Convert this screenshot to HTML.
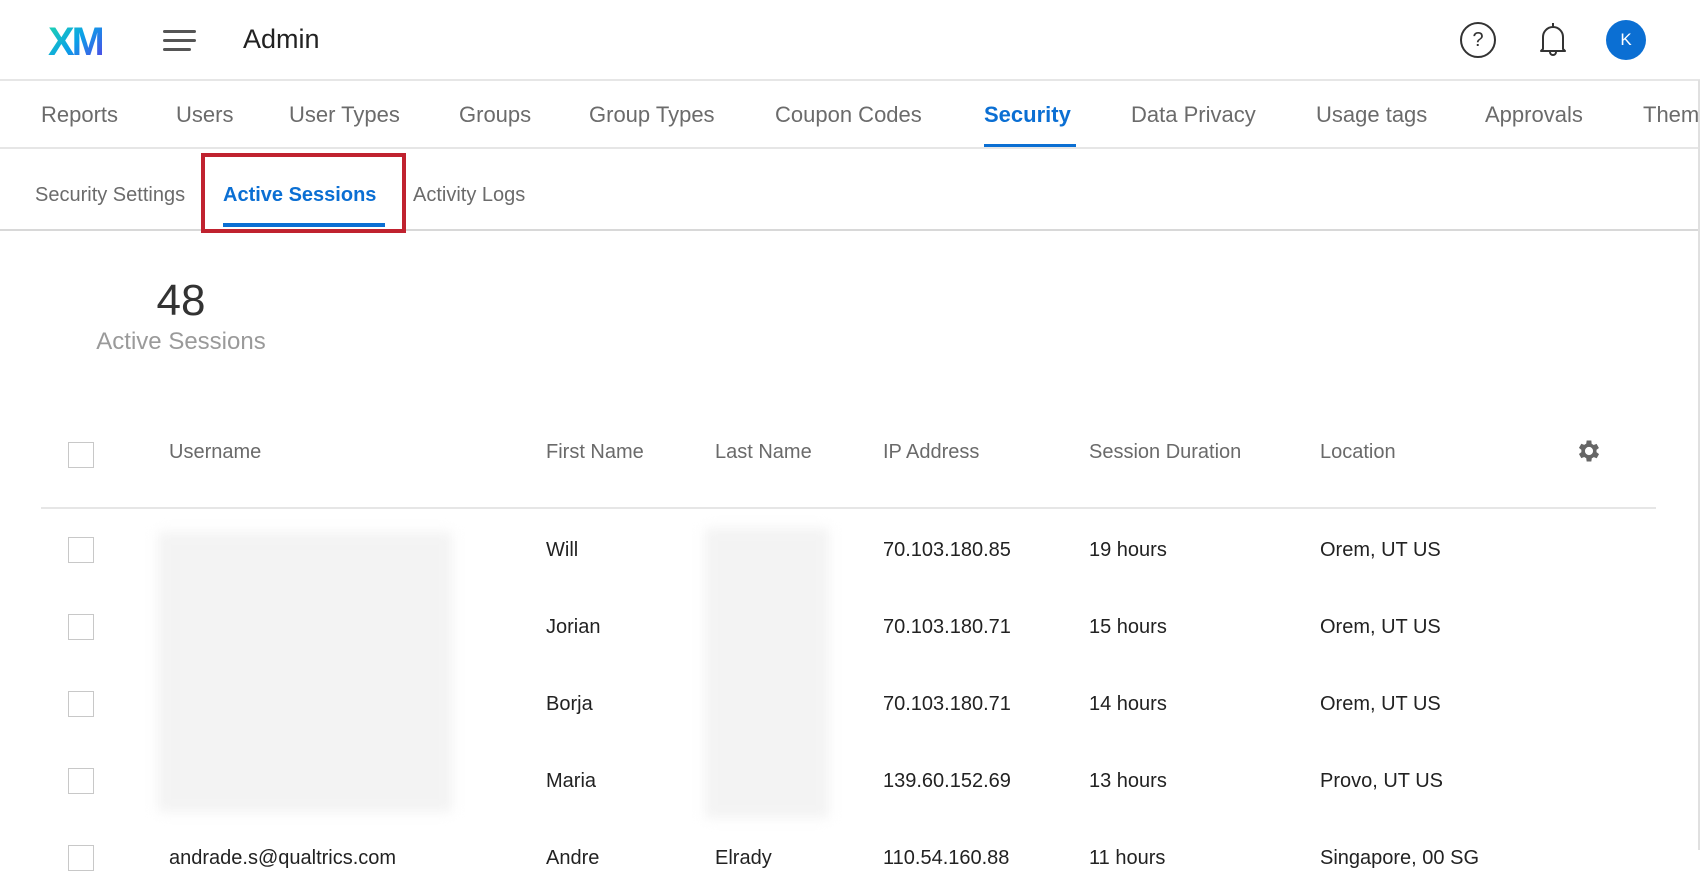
<!DOCTYPE html>
<html><head><meta charset="utf-8"><style>
*{margin:0;padding:0;box-sizing:border-box}
body{width:1700px;height:850px;overflow:hidden;background:#fff;font-family:"Liberation Sans",Arial,sans-serif;position:relative;color:#222}
.a{position:absolute;white-space:nowrap}
.nav{font-size:22px;color:#6b6b6b;top:102px}
.sub{font-size:20px;color:#6b6b6b;top:184px}
.hd{font-size:20px;color:#6a6a6a;top:441px}
.cb{position:absolute;left:68px;width:26px;height:26px;border:1.5px solid #c8c8c8;background:#fff}
.td{font-size:20px;color:#222}
.blur{position:absolute;background:#f3f3f3;filter:blur(6px)}
</style></head><body>
<div class="a" style="left:48px;top:20px;font-size:40px;font-weight:bold;letter-spacing:-3px;background:linear-gradient(135deg,#21dba8,#0aa0e8 50%,#5b3ce6);-webkit-background-clip:text;background-clip:text;color:transparent">XM</div>
<div class="a" style="left:163px;top:30px;width:33px;height:3px;background:#555;border-radius:2px"></div>
<div class="a" style="left:163px;top:39px;width:33px;height:3px;background:#555;border-radius:2px"></div>
<div class="a" style="left:163px;top:48px;width:28px;height:3px;background:#555;border-radius:2px"></div>
<div class="a" style="left:243px;top:24px;font-size:27px;color:#222">Admin</div>
<div class="a" style="left:1460px;top:22px;width:36px;height:36px;border:2px solid #333;border-radius:50%;text-align:center;font-size:20px;line-height:32px;color:#333">?</div>
<svg class="a" style="left:1536px;top:20px" width="34" height="40" viewBox="0 0 34 40"><path d="M7 29 V17 a10 10 0 0 1 20 0 V29 L29 31 H5 Z" fill="none" stroke="#333" stroke-width="2" stroke-linejoin="round"/><path d="M14 32 a3 3 0 0 0 6 0" fill="none" stroke="#333" stroke-width="2"/><line x1="17" y1="3" x2="17" y2="7" stroke="#333" stroke-width="2"/></svg>
<div class="a" style="left:1606px;top:20px;width:40px;height:40px;border-radius:50%;background:#0b6fd3;color:#fff;text-align:center;line-height:40px;font-size:17px">K</div>
<div class="a" style="left:0;top:79px;width:1700px;height:2px;background:#e6e6e6"></div>
<div class="a nav" style="left:41px">Reports</div>
<div class="a nav" style="left:176px">Users</div>
<div class="a nav" style="left:289px">User Types</div>
<div class="a nav" style="left:459px">Groups</div>
<div class="a nav" style="left:589px">Group Types</div>
<div class="a nav" style="left:775px">Coupon Codes</div>
<div class="a nav" style="left:984px;color:#0b6fd3;font-weight:bold">Security</div>
<div class="a" style="left:984px;top:144px;width:92px;height:4px;background:#0b6fd3"></div>
<div class="a nav" style="left:1131px">Data Privacy</div>
<div class="a nav" style="left:1316px">Usage tags</div>
<div class="a nav" style="left:1485px">Approvals</div>
<div class="a nav" style="left:1643px">Themes</div>
<div class="a" style="left:0;top:147px;width:1700px;height:2px;background:#e6e6e6"></div>
<div class="a sub" style="left:35px">Security Settings</div>
<div class="a sub" style="left:223px;color:#0b6fd3;font-weight:bold">Active Sessions</div>
<div class="a" style="left:223px;top:223px;width:162px;height:4px;background:#0b6fd3"></div>
<div class="a sub" style="left:413px">Activity Logs</div>
<div class="a" style="left:0;top:229px;width:1700px;height:2px;background:#d8d8d8"></div>
<div class="a" style="left:201px;top:153px;width:205px;height:80px;border:4px solid #c0222f"></div>
<div class="a" style="left:1698px;top:80px;width:2px;height:770px;background:#e0e0e0"></div>
<div class="a" style="left:81px;width:200px;text-align:center;top:276px;font-size:44px;color:#333">48</div>
<div class="a" style="left:81px;width:200px;text-align:center;top:328px;font-size:24px;color:#9a9a9a">Active Sessions</div>
<div class="cb" style="top:442px"></div>
<div class="a hd" style="left:169px">Username</div>
<div class="a hd" style="left:546px">First Name</div>
<div class="a hd" style="left:715px">Last Name</div>
<div class="a hd" style="left:883px">IP Address</div>
<div class="a hd" style="left:1089px">Session Duration</div>
<div class="a hd" style="left:1320px">Location</div>
<svg class="a" style="left:1575px;top:437px" width="28" height="28" viewBox="0 0 24 24"><path fill="#666" d="M19.4 13a7.5 7.5 0 0 0 0-2l2.1-1.6-2-3.5-2.5 1a7 7 0 0 0-1.7-1L15 3h-4l-.4 2.8a7 7 0 0 0-1.7 1l-2.5-1-2 3.5L6.5 11a7.5 7.5 0 0 0 0 2l-2.1 1.6 2 3.5 2.5-1a7 7 0 0 0 1.7 1L11 21h4l.4-2.8a7 7 0 0 0 1.7-1l2.5 1 2-3.5zM13 15.5a3.5 3.5 0 1 1 0-7 3.5 3.5 0 0 1 0 7z" transform="translate(-1 0)"/></svg>
<div class="a" style="left:41px;top:507px;width:1615px;height:2px;background:#e6e6e6"></div>
<div class="blur" style="left:158px;top:532px;width:294px;height:280px"></div>
<div class="blur" style="left:705px;top:528px;width:124px;height:290px"></div>
<div class="cb" style="top:537px"></div>
<div class="a td" style="left:546px;top:539px">Will</div>
<div class="a td" style="left:883px;top:539px">70.103.180.85</div>
<div class="a td" style="left:1089px;top:539px">19 hours</div>
<div class="a td" style="left:1320px;top:539px">Orem, UT US</div>
<div class="cb" style="top:614px"></div>
<div class="a td" style="left:546px;top:616px">Jorian</div>
<div class="a td" style="left:883px;top:616px">70.103.180.71</div>
<div class="a td" style="left:1089px;top:616px">15 hours</div>
<div class="a td" style="left:1320px;top:616px">Orem, UT US</div>
<div class="cb" style="top:691px"></div>
<div class="a td" style="left:546px;top:693px">Borja</div>
<div class="a td" style="left:883px;top:693px">70.103.180.71</div>
<div class="a td" style="left:1089px;top:693px">14 hours</div>
<div class="a td" style="left:1320px;top:693px">Orem, UT US</div>
<div class="cb" style="top:768px"></div>
<div class="a td" style="left:546px;top:770px">Maria</div>
<div class="a td" style="left:883px;top:770px">139.60.152.69</div>
<div class="a td" style="left:1089px;top:770px">13 hours</div>
<div class="a td" style="left:1320px;top:770px">Provo, UT US</div>
<div class="cb" style="top:845px"></div>
<div class="a td" style="left:169px;top:847px">andrade.s@qualtrics.com</div>
<div class="a td" style="left:546px;top:847px">Andre</div>
<div class="a td" style="left:715px;top:847px">Elrady</div>
<div class="a td" style="left:883px;top:847px">110.54.160.88</div>
<div class="a td" style="left:1089px;top:847px">11 hours</div>
<div class="a td" style="left:1320px;top:847px">Singapore, 00 SG</div>
</body></html>
